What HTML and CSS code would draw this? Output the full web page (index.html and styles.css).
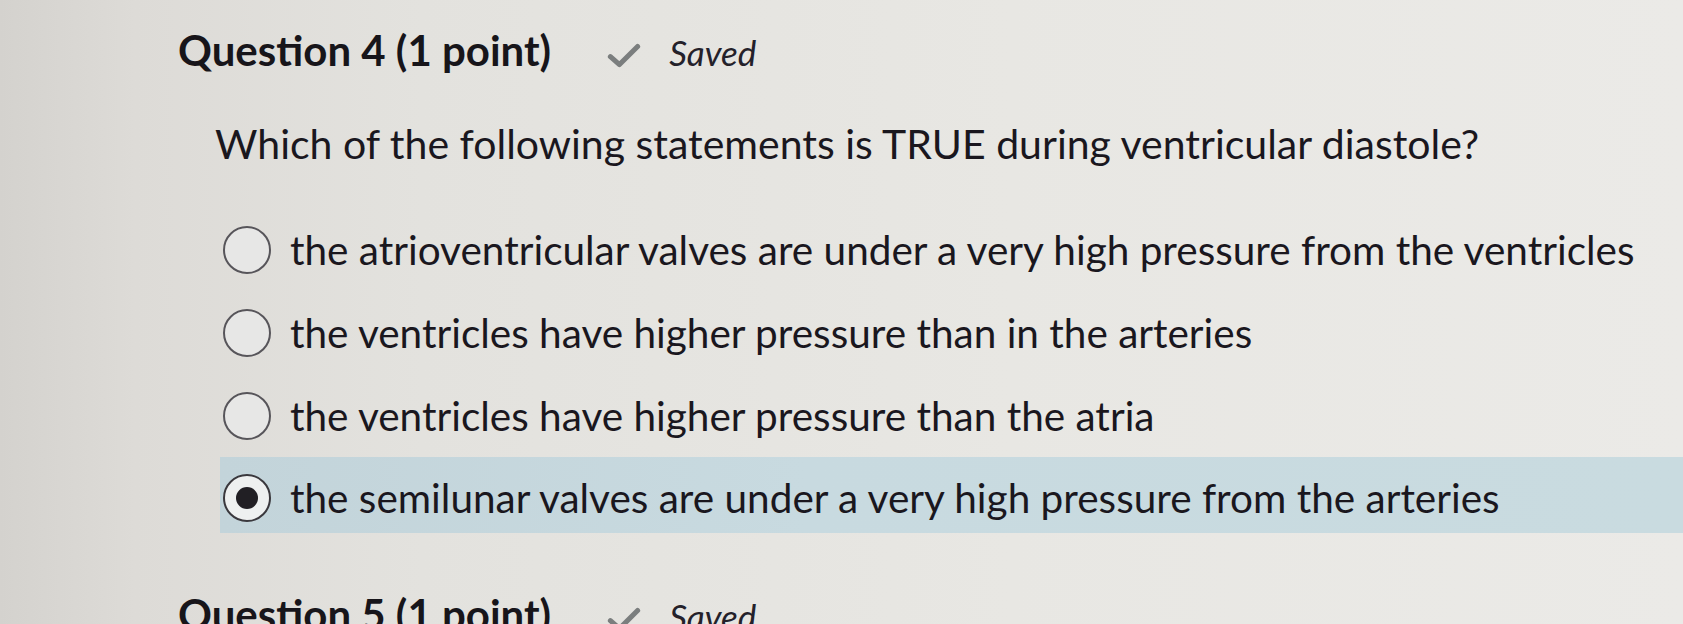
FILE: index.html
```html
<!DOCTYPE html>
<html lang="en">
<head>
<meta charset="utf-8">
<title>Question 4</title>
<link rel="stylesheet" href="styles.css">
</head>
<body>
<main class="page">
  <section class="question">
    <header class="q-head">
      <h2 class="q-title">Question 4 (1 point)</h2>
      <span class="saved">
        <svg class="check" viewBox="0 0 30 22" aria-hidden="true"><path d="M3 12 L11 19 L27 3" /></svg>
        <span class="saved-text">Saved</span>
      </span>
    </header>
    <p class="q-text">Which of the following statements is TRUE during ventricular diastole?</p>
    <ul class="options">
      <li class="opt"><span class="radio"></span><span class="label">the atrioventricular valves are under a very high pressure from the ventricles</span></li>
      <li class="opt"><span class="radio"></span><span class="label">the ventricles have higher pressure than in the arteries</span></li>
      <li class="opt"><span class="radio"></span><span class="label">the ventricles have higher pressure than the atria</span></li>
      <li class="opt selected"><span class="radio"><span class="dot"></span></span><span class="label">the semilunar valves are under a very high pressure from the arteries</span></li>
    </ul>
  </section>
  <section class="question next">
    <header class="q-head">
      <h2 class="q-title">Question 5 (1 point)</h2>
      <span class="saved">
        <svg class="check" viewBox="0 0 30 22" aria-hidden="true"><path d="M3 12 L11 19 L27 3" /></svg>
        <span class="saved-text">Saved</span>
      </span>
    </header>
  </section>
</main>
</body>
</html>
```
FILE: styles.css
```css
html, body {
  margin: 0;
  padding: 0;
  height: 100%;
  overflow: hidden;
}
body {
  background: linear-gradient(90deg, #d4d2ce 0%, #dddbd7 8%, #e3e2de 25%, #e8e7e3 60%, #ebeae7 100%);
  color: #1a171e;
  font-family: Lato, "Open Sans", sans-serif;
}
.page {
  padding-top: 24px;
}
.q-head {
  display: flex;
  align-items: baseline;
  margin-left: 178px;
  height: 52px;
}
.q-title {
  margin: 0;
  font-size: 42px;
  font-weight: 700;
  line-height: 52px;
  color: #17151a;
}
.saved {
  display: flex;
  align-items: baseline;
  margin-left: 56px;
}
.check {
  width: 34px;
  height: 25px;
  fill: none;
  stroke: #7b7e7e;
  stroke-width: 4.5;
  stroke-linecap: round;
  stroke-linejoin: round;
  align-self: center;
  position: relative;
  top: 3px;
}
.saved-text {
  margin-left: 28px;
  font-style: italic;
  font-size: 35px;
  color: #24212a;
}
.q-text {
  margin: 0 0 0 215px;
  padding-top: 44px;
  font-size: 41px;
  line-height: 48px;
}
.options {
  list-style: none;
  margin: 0;
  padding: 0;
  padding-top: 40px;
}
.opt {
  box-sizing: border-box;
  display: flex;
  align-items: center;
  height: 83px;
  margin-left: 220px;
  padding-left: 3px;
}
.opt.selected {
  height: 76px;
  padding-top: 6px;
  background: linear-gradient(90deg, #c3d4da 0%, #c8dae0 40%, #c9dbe0 100%);
}
.radio {
  flex: none;
  width: 44px;
  height: 44px;
  border: 2.5px solid #57555a;
  border-radius: 50%;
  background: #e7e7e6;
  display: flex;
  align-items: center;
  justify-content: center;
}
.selected .radio {
  border-color: #3a383d;
  background: #eef0f0;
}
.dot {
  width: 22px;
  height: 22px;
  border-radius: 50%;
  background: #211f24;
}
.label {
  margin-left: 19px;
  font-size: 40.5px;
  line-height: 48px;
  white-space: nowrap;
}
.next {
  padding-top: 55px;
}
```
